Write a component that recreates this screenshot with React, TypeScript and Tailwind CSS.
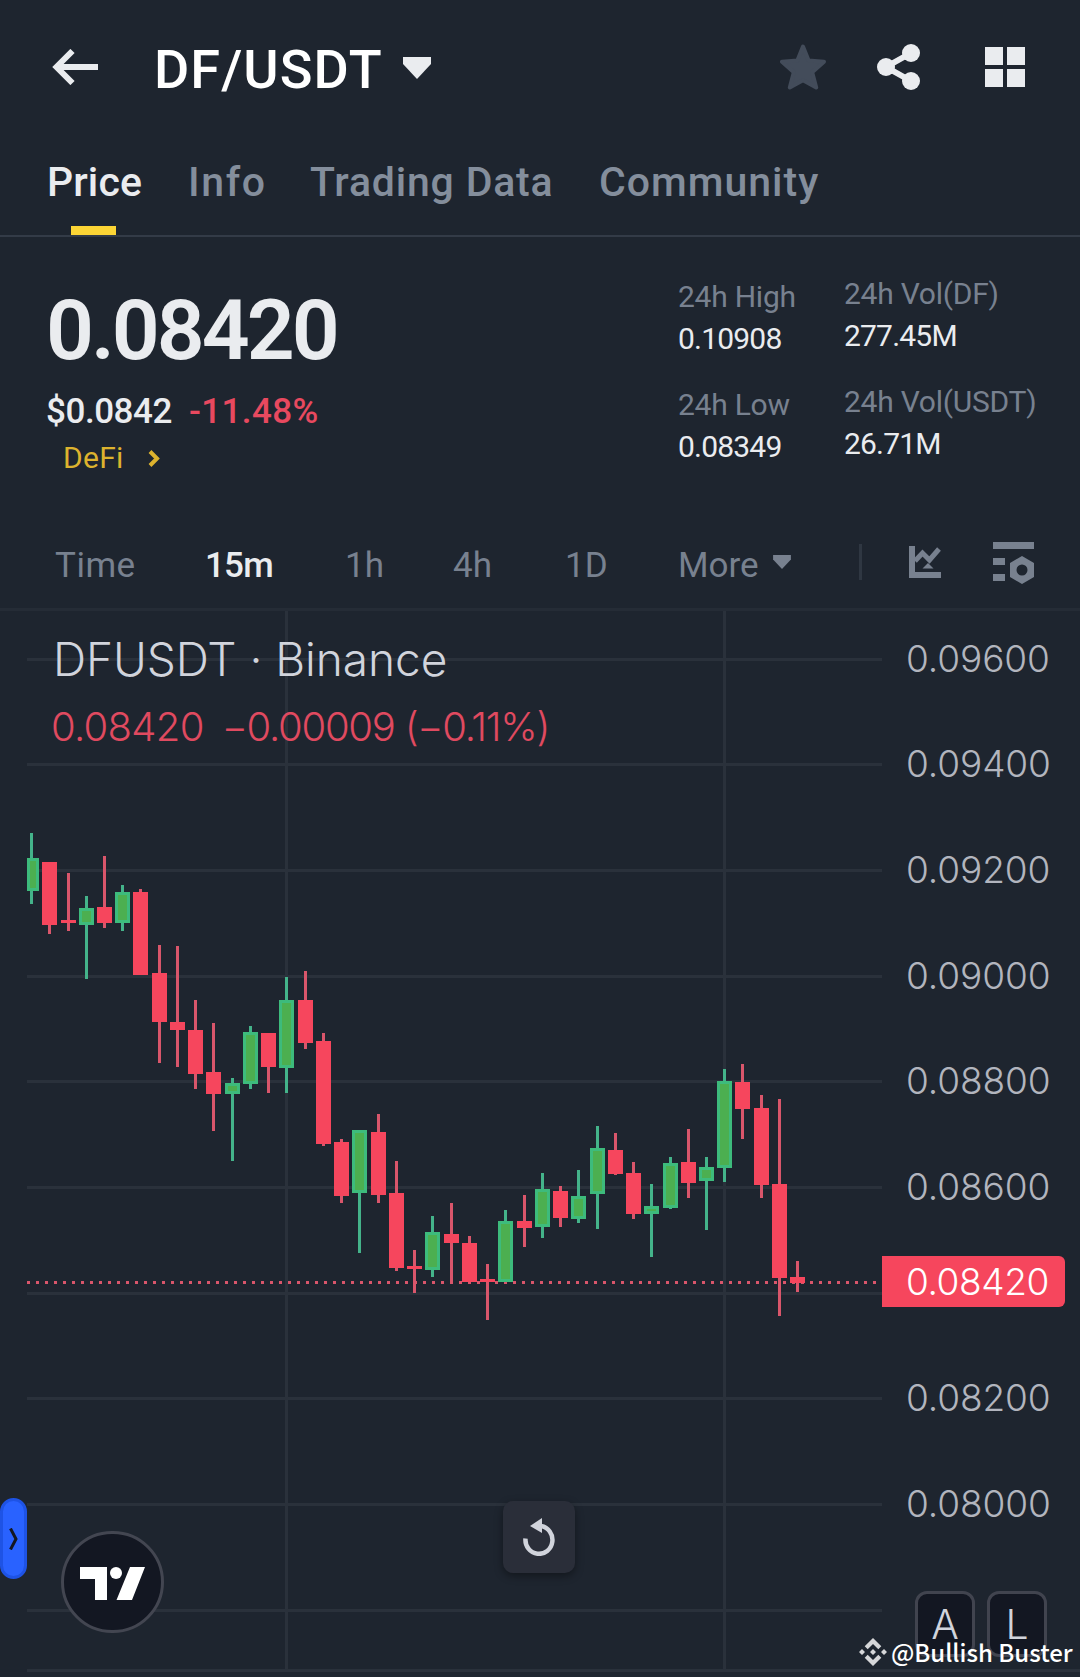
import type { ReactNode } from "react";
import clsx from "clsx";

const tabs = [
  { label: "Price", className: "w-[141px] tracking-[0.1px]", active: true },
  { label: "Info", className: "w-[122px] tracking-[1.6px]" },
  { label: "Trading Data", className: "w-[289px] tracking-[0.8px]" },
  { label: "Community", className: "w-[240px] tracking-[1px]" },
];

const stats = [
  [
    { label: "24h High", value: "0.10908" },
    { label: "24h Low", value: "0.08349" },
  ],
  [
    { label: "24h Vol(DF)", value: "277.45M" },
    { label: "24h Vol(USDT)", value: "26.71M" },
  ],
];

const intervals = [
  { label: "Time", className: "w-[150px] tracking-[0.5px]" },
  { label: "15m", className: "w-[140px] tracking-[-0.8px]", active: true },
  { label: "1h", className: "w-[108px]" },
  { label: "4h", className: "w-[112px]" },
  { label: "1D", className: "w-[113px]" },
];

const LAST_PRICE = "0.08420";
const axis = ["0.09600", "0.09400", "0.09200", "0.09000", "0.08800", "0.08600", LAST_PRICE, "0.08200", "0.08000"];

const gridRows = [659, 764, 870, 976, 1081, 1187, 1293, 1398, 1504, 1610];
const gridCols = [286.5, 724.5];

// x, high, body top, body bottom, low, up
type Candle = [number, number, number, number, number, boolean];

const candles: Candle[] = [
  [31.5, 833, 858, 891, 904, true],
  [49.5, 862, 862, 925, 934, false],
  [68.5, 873, 920, 923, 931, false],
  [86.5, 896, 908, 925, 979, true],
  [104.5, 856, 907, 923, 928, false],
  [122.5, 885, 892, 923, 931, true],
  [140.5, 889, 892, 975, 975, false],
  [159.5, 945, 973, 1022, 1063, false],
  [177.5, 946, 1022, 1030, 1067, false],
  [195.5, 1000, 1030, 1074, 1089, false],
  [213.5, 1023, 1072, 1094, 1131, false],
  [232.5, 1078, 1083, 1094, 1161, true],
  [250.5, 1026, 1032, 1084, 1089, true],
  [268.5, 1033, 1033, 1067, 1093, false],
  [286.5, 977, 1000, 1068, 1093, true],
  [305.5, 971, 1000, 1043, 1049, false],
  [323.5, 1033, 1041, 1144, 1146, false],
  [341.5, 1139, 1142, 1196, 1203, false],
  [359.5, 1130, 1130, 1193, 1253, true],
  [378.5, 1114, 1132, 1195, 1203, false],
  [396.5, 1161, 1193, 1268, 1271, false],
  [414.5, 1250, 1266, 1269, 1293, false],
  [432.5, 1216, 1232, 1270, 1277, true],
  [451.5, 1203, 1234, 1243, 1284, false],
  [469.5, 1236, 1243, 1282, 1284, false],
  [487.5, 1264, 1279, 1282, 1320, false],
  [505.5, 1210, 1221, 1282, 1282, true],
  [524.5, 1195, 1221, 1228, 1247, false],
  [542.5, 1173, 1189, 1227, 1238, true],
  [560.5, 1186, 1191, 1218, 1227, false],
  [578.5, 1170, 1196, 1219, 1223, true],
  [597.5, 1126, 1148, 1194, 1229, true],
  [615.5, 1133, 1150, 1174, 1175, false],
  [633.5, 1162, 1173, 1214, 1219, false],
  [651.5, 1184, 1206, 1214, 1257, true],
  [670.5, 1157, 1163, 1208, 1209, true],
  [688.5, 1129, 1162, 1183, 1198, false],
  [706.5, 1157, 1167, 1181, 1230, true],
  [724.5, 1069, 1081, 1168, 1182, true],
  [742.5, 1064, 1082, 1109, 1139, false],
  [761.5, 1095, 1108, 1185, 1198, false],
  [779.5, 1099, 1184, 1278, 1316, false],
  [797.5, 1261, 1277, 1283, 1292, false],
];

function Caret({ className }: { className: string }) {
  return (
    <svg viewBox="0 0 28 22" className={className} fill="currentColor">
      <path d="M0 0h28v7L14 22 0 7z" />
    </svg>
  );
}

function Header() {
  return (
    <header className="flex h-[134px] items-center text-[#eaecef]">
      <svg viewBox="0 0 46 36" className="ml-[52px] h-9 w-[46px]" fill="none" stroke="currentColor" strokeWidth="6">
        <path d="M46 18H5M20.500 2L4.500 18l16 16" />
      </svg>
      <h1 className="ml-14 w-[249px] pt-1.5 text-[54px] leading-[60px] font-medium tracking-[1.1px] whitespace-nowrap text-white">
        DF/USDT
      </h1>
      <Caret className="mt-0.5 h-[22px] w-7" />
      <svg viewBox="0 0 46 46" className="ml-[349px] h-[46px] w-[46px] text-[#434c5a]" fill="currentColor" stroke="currentColor" strokeWidth="4" strokeLinejoin="round">
        <path d="M23 2.500l5.600 14 15.400 1.200-11.800 10.500 4 15.300L23 36.300 9.800 43.500l4-15.300L2 17.700l15.400-1.200z" />
      </svg>
      <svg viewBox="0 0 43 46" className="ml-[51px] h-[46px] w-[43px]" fill="currentColor">
        <path d="M34 9L9 23l25 14" fill="none" stroke="currentColor" strokeWidth="6" />
        <circle cx="34" cy="9" r="9" />
        <circle cx="9" cy="23" r="9" />
        <circle cx="34" cy="37" r="9" />
      </svg>
      <svg viewBox="0 0 40 40" className="ml-[65px] h-10 w-10" fill="currentColor">
        <path d="M0 0h18v18H0zM22 0h18v18H22zM0 22h18v18H0zM22 22h18v18H22z" />
      </svg>
    </header>
  );
}

function Tabs() {
  return (
    <nav className="flex h-[103px] border-b-2 border-[#333b47] pl-[47px] text-[41px] font-medium text-[#848e9c]">
      {tabs.map(({ label, className, active }) => (
        <div key={label} className={clsx("flex flex-col whitespace-nowrap", className, active && "text-[#eaecef]")}>
          <span className="h-[92px] leading-[96px]">{label}</span>
          {active && <span className="ml-6 h-[9px] w-[45px] bg-[#fcd535]" />}
        </div>
      ))}
    </nav>
  );
}

function Summary() {
  return (
    <section className="flex h-[285px] pl-[46px]">
      <div className="w-[632px] pt-[52px]">
        <div className="text-[84px] leading-[84px] font-semibold tracking-[-3px] text-[#eaecef]">{LAST_PRICE}</div>
        <div className="mt-[18px] flex gap-[17px] pt-px text-[35px] leading-[40px] font-medium">
          <span className="tracking-[-0.45px] text-[#eaecef]">$0.0842</span>
          <span className="tracking-[0.4px] text-[#e8495f]">-11.48%</span>
        </div>
        <div className="mt-[11px] ml-[17px] flex items-center text-[30px] leading-[30px] text-[#ddb32e]">
          <span className="w-[85px] tracking-[0.3px]">DeFi</span>
          <svg viewBox="0 0 12 17" className="h-[17px] w-3" fill="none" stroke="currentColor" strokeWidth="4">
            <path d="M2 1.500l7 7-7 7" />
          </svg>
        </div>
      </div>
      {stats.map((column, i) => (
        <div key={i} className={clsx("flex w-[166px] flex-col gap-6 whitespace-nowrap", i === 0 ? "pt-[39px]" : "pt-9")}>
          {column.map(({ label, value }) => (
            <div key={label} className="text-[30px] leading-[42px]">
              <div className="tracking-[-0.25px] text-[#78818f]">{label}</div>
              <div className="tracking-[-0.8px] text-[#eaecef]">{value}</div>
            </div>
          ))}
        </div>
      ))}
    </section>
  );
}

function IntervalBar() {
  return (
    <div className="flex h-[86px] items-center pl-[55px] text-[35px] text-[#78818f]">
      {intervals.map(({ label, className, active }) => (
        <span key={label} className={clsx("pt-0.5 leading-[42px]", className, active && "font-medium text-[#eaecef]")}>
          {label}
        </span>
      ))}
      <span className="w-[95px] pt-0.5 leading-[42px]">More</span>
      <Caret className="-mt-1.5 h-[14px] w-[18px]" />
      <div className="-mt-1.5 ml-[68px] h-9 w-[3px] bg-[#2f3742]" />
      <svg viewBox="0 0 32 32" className="-mt-1.5 ml-[47px] h-8 w-8" fill="currentColor">
        <path d="M0 0h6v26h26v6H0z" />
        <path d="M6 15l7.500-8 7 7L30 3" fill="none" stroke="currentColor" strokeWidth="5" />
        <path d="M19 17l5.500 5.500h-11z" />
      </svg>
      <svg viewBox="0 0 41 42" className="-mt-1 ml-[52px] h-[42px] w-[41px]" fill="currentColor">
        <path d="M0 0h41v7H0zM0 16h12v7H0zM0 32h12v7H0z" />
        <path fillRule="evenodd" d="M29 14l12 7v14l-12 7-12-7V21zM29 22.500a5.500 5.500 0 1 0 0 11 5.500 5.500 0 0 0 0-11z" />
      </svg>
    </div>
  );
}

function CandleChart() {
  return (
    <svg viewBox="0 611 882 1058" width="882" height="1058" className="block shrink-0">
      <g stroke="#2a313b" strokeWidth="3">
        {gridRows.map((y) => (
          <line key={y} x1="27" x2="882" y1={y + 0.5} y2={y + 0.5} />
        ))}
        {gridCols.map((x) => (
          <line key={x} x1={x} x2={x} y1="611" y2="1669" />
        ))}
      </g>
      <line x1="27" x2="878" y1="1282.5" y2="1282.5" stroke="#d9566b" strokeWidth="3" strokeDasharray="3 6" />
      {candles.map(([x, high, top, bottom, low, up]) => {
        const left = Math.max(27, x - 7.5);
        const width = x + 7.5 - left;
        return (
          <g key={x}>
            <rect x={x - 1.5} y={high} width="3" height={low - high} fill={up ? "#44b38a" : "#d9566b"} />
            <rect x={left} y={top} width={width} height={bottom - top} fill={up ? "#3dbb7c" : "#f6465d"} />
            {up && <rect x={left + 3} y={top + 3} width={width - 6} height={bottom - top - 6} fill="#4caf50" />}
          </g>
        );
      })}
    </svg>
  );
}

function ScaleButton({ children }: { children: ReactNode }) {
  return (
    <button className="flex h-[66px] w-[60px] justify-center rounded-xl border-3 border-[#41444f] bg-[#131722] text-[41px] leading-[60px] font-light text-[#d1d4dc]">
      {children}
    </button>
  );
}

function PriceAxis() {
  return (
    <div className="-mt-[5px] w-[198px] text-[37px] leading-[44px] font-light tracking-[-0.1px] text-[#b2b5be]">
      {axis.map((price) =>
        price === LAST_PRICE ? (
          <div key={price} className="flex h-[105.6px] items-center pb-[21px]">
            <div className="h-[51px] w-[183px] rounded-r-md bg-[#f6465d] pl-6 leading-[51px] tracking-[-0.4px] text-white">
              {price}
            </div>
          </div>
        ) : (
          <div key={price} className="flex h-[105.6px] items-center pl-6">
            {price}
          </div>
        )
      )}
      <div className="mt-[35px] ml-[33px] flex gap-3">
        <ScaleButton>A</ScaleButton>
        <ScaleButton>L</ScaleButton>
      </div>
    </div>
  );
}

function Chart() {
  return (
    <section className="relative h-[1069px] border-t-3 border-[#252c36] font-[Inter,sans-serif]">
      <div className="flex h-[1058px]">
        <CandleChart />
        <PriceAxis />
      </div>
      <div className="ml-[27px] h-[3px] bg-[#2a313b]" />

      <div className="absolute top-[20px] left-[51px] font-light whitespace-nowrap">
        <div className="ml-0.5 text-[46px] leading-[56px] tracking-[-0.05px] text-[#d1d4dc]">DFUSDT · Binance</div>
        <div className="mt-3 flex gap-[18px] text-[40px] leading-[56px] text-[#e04a60]">
          <span className="tracking-[-0.7px]">{LAST_PRICE}</span>
          <span className="tracking-[-1.25px]">−0.00009 (−0.11%)</span>
        </div>
      </div>

      <button className="absolute top-[887px] left-0 flex h-[81px] w-[27px] items-center justify-center rounded-full border-3 border-[#1e53e5] bg-[#2962ff] text-[#131722]">
        <svg viewBox="0 0 9 22" className="h-[22px] w-[9px]" fill="none" stroke="currentColor" strokeWidth="3">
          <path d="M1.500 0.500l5.500 10.500-5.500 10.500" />
        </svg>
      </button>

      <div className="absolute top-[920px] left-[61px] flex h-[102px] w-[103px] items-center justify-center rounded-full border-3 border-[#434651] bg-[#131722] text-white">
        <svg viewBox="0 0 65 33" className="mt-0.5 h-[33px] w-[65px]" fill="currentColor">
          <path d="M0 0h27v33H15V12H0zM50 0h15L52 33H36.500z" />
          <circle cx="36" cy="6" r="6" />
        </svg>
      </div>

      <button className="absolute top-[890px] left-[503px] flex h-[72px] w-[72px] items-center justify-center rounded-[10px] bg-[#2a2e39] text-[#d1d4dc] shadow-[0_3px_8px_rgba(0,0,0,0.4)]">
        <svg viewBox="0 0 32 38" className="h-[38px] w-8" fill="currentColor">
          <path d="M2.500 20.500A13.500 14 0 1 0 18 8" fill="none" stroke="currentColor" strokeWidth="4.500" />
          <path d="M19 0v15L7 8z" />
        </svg>
      </button>

      <div className="absolute top-[1025px] left-[859px] flex items-center gap-1 font-['Noto_Sans_CJK_SC',sans-serif] text-[24px] leading-[32px] font-medium whitespace-nowrap text-white">
        <svg viewBox="0 0 28 28" className="h-7 w-7 text-[#d6d7d9]" fill="currentColor">
          <path d="M14 0l8.300 8.300-3 3L14 6l-5.300 5.300-3-3zM14 28l8.300-8.300-3-3L14 22l-5.300-5.300-3 3zM14 11l3 3-3 3-3-3zM3 11l3 3-3 3-3-3zM25 11l3 3-3 3-3-3z" />
        </svg>
        <span>@Bullish Buster</span>
      </div>
    </section>
  );
}

export default function App() {
  return (
    <div className="h-[1677px] w-[1080px] overflow-hidden bg-[#1e252f] font-[Roboto,sans-serif]">
      <Header />
      <Tabs />
      <Summary />
      <IntervalBar />
      <Chart />
    </div>
  );
}
